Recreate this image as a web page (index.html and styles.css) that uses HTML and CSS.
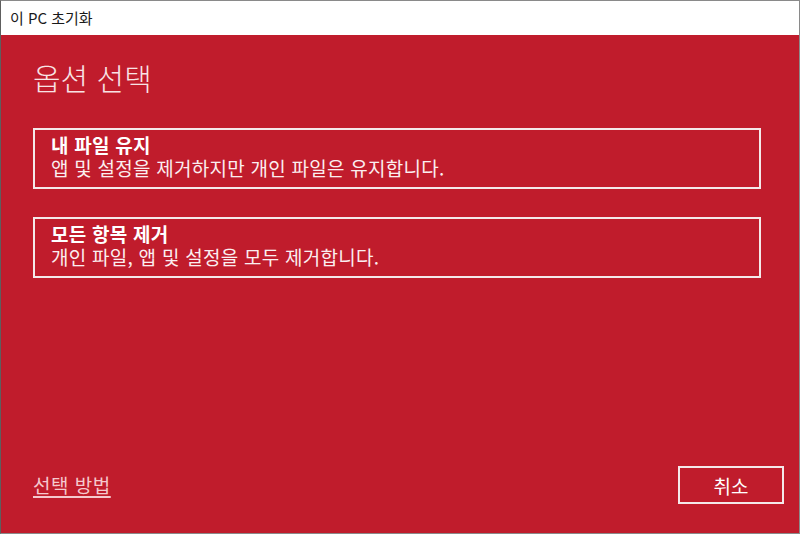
FILE: index.html
```html
<!DOCTYPE html>
<html lang="ko">
<head>
<meta charset="utf-8">
<title>이 PC 초기화</title>
<link rel="stylesheet" href="styles.css">
</head>
<body>
<div class="window">
  <div class="titlebar">이 PC 초기화</div>
  <div class="content">
    <h1 class="heading">옵션 선택</h1>
    <div class="options">
      <div class="option">
        <div class="option-title">내 파일 유지</div>
        <div class="option-desc">앱 및 설정을 제거하지만 개인 파일은 유지합니다.</div>
      </div>
      <div class="option">
        <div class="option-title">모든 항목 제거</div>
        <div class="option-desc">개인 파일, 앱 및 설정을 모두 제거합니다.</div>
      </div>
    </div>
    <div class="footer">
      <a class="help-link" href="#">선택 방법</a>
      <button class="cancel">취소</button>
    </div>
  </div>
</div>
</body>
</html>
```
FILE: styles.css
```css
html, body {
  margin: 0;
  padding: 0;
}
body {
  font-family: "Noto Sans CJK KR", "Noto Sans", sans-serif;
}
.window {
  width: 800px;
  height: 534px;
  box-sizing: border-box;
  border: 1px solid #8a8a8a;
  border-left-color: #5e5e5e;
  display: flex;
  flex-direction: column;
  background: #c01c2c;
}
.titlebar {
  height: 34px;
  background: #ffffff;
  color: #1a1a1a;
  font-size: 15px;
  line-height: 34px;
  padding-left: 9px;
  flex: none;
}
.content {
  flex: 1;
  display: flex;
  flex-direction: column;
  padding: 23px 15px 29px 32px;
  color: #ffffff;
}
.heading {
  margin: 0;
  font-size: 30px;
  font-weight: 300;
  line-height: 38px;
  color: #f8e3e5;
}
.options {
  display: flex;
  flex-direction: column;
  gap: 28px;
  margin-top: 32px;
}
.option {
  width: 728px;
  box-sizing: border-box;
  border: 2px solid #f4e9ea;
  padding: 3px 16px 8px 16px;
}
.option-title {
  font-size: 19px;
  font-weight: 700;
  line-height: 23px;
  letter-spacing: 0.25px;
}
.option-desc {
  font-size: 19px;
  line-height: 23px;
  letter-spacing: 0.25px;
  color: #fbeef0;
}
.footer {
  margin-top: auto;
  display: flex;
  justify-content: space-between;
  align-items: center;
}
.help-link {
  font-size: 19px;
  line-height: 24px;
  letter-spacing: 0.5px;
  color: #f5c9ce;
  text-decoration: underline;
  text-decoration-thickness: 2px;
  text-underline-offset: 3px;
}
.cancel {
  width: 106px;
  height: 38px;
  box-sizing: border-box;
  border: 2px solid #f4e9ea;
  background: transparent;
  color: #ffffff;
  font-family: "Noto Sans CJK KR", "Noto Sans", sans-serif;
  font-size: 19px;
  padding: 0;
  cursor: pointer;
}
```
